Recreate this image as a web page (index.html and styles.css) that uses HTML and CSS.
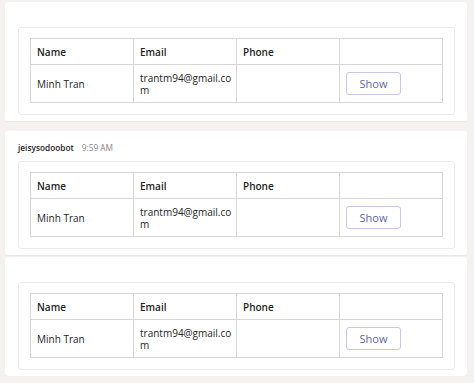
FILE: index.html
```html
<!DOCTYPE html>
<html lang="en">

<head>
  <meta charset="UTF-8" />
  <title>Chat</title>
  <link rel="stylesheet" href="styles.css">
</head>

<body>

  <div class="chat">

    <div class="message continued">
      <div class="card">
        <table class="contacts">
          <tr>
            <th>Name</th>
            <th>Email</th>
            <th>Phone</th>
            <th></th>
          </tr>
          <tr>
            <td>Minh Tran</td>
            <td>trantm94@gmail.com</td>
            <td></td>
            <td><button class="show">Show</button></td>
          </tr>
        </table>
      </div>
    </div>

    <div class="message first">
      <div class="meta">
        <span class="author">jeisysodoobot</span>
        <span class="time">9:59 AM</span>
      </div>
      <div class="card">
        <table class="contacts">
          <tr>
            <th>Name</th>
            <th>Email</th>
            <th>Phone</th>
            <th></th>
          </tr>
          <tr>
            <td>Minh Tran</td>
            <td>trantm94@gmail.com</td>
            <td></td>
            <td><button class="show">Show</button></td>
          </tr>
        </table>
      </div>
    </div>

    <div class="message continued">
      <div class="card">
        <table class="contacts">
          <tr>
            <th>Name</th>
            <th>Email</th>
            <th>Phone</th>
            <th></th>
          </tr>
          <tr>
            <td>Minh Tran</td>
            <td>trantm94@gmail.com</td>
            <td></td>
            <td><button class="show">Show</button></td>
          </tr>
        </table>
      </div>
    </div>

  </div>

</body>
</html>
```

FILE: styles.css
```css
body {
  margin: 0;
  background: #f3f2f1;
  font-family: 'Open Sans', 'Noto Sans', sans-serif;
  color: #252423;
}

.chat {
  display: flex;
  flex-direction: column;
  padding: 2px 7px 0 5px;
}

.message {
  background: #fff;
  border-radius: 3px;
  box-shadow: 0 1px 1px rgba(0, 0, 0, 0.05);
  padding: 25px 12px 6px 13px;
}

.message.first {
  margin-top: 10px;
  margin-bottom: 2px;
  padding-top: 10px;
  padding-bottom: 6px;
}

.meta {
  display: flex;
  align-items: baseline;
  gap: 8px;
  height: 13px;
  margin-bottom: 7px;
  font-size: 8.3px;
  line-height: 13px;
}

.author {
  font-weight: 600;
}

.time {
  color: #8a8886;
}

.card {
  border: 1px solid #ebebeb;
  border-radius: 3px;
  padding: 10px 11px 11px;
}

.contacts {
  width: 100%;
  table-layout: fixed;
  border-collapse: collapse;
  font-size: 10px;
  line-height: 12px;
}

.contacts th,
.contacts td {
  border: 1px solid #d6d6d6;
  padding: 0 3px 0 6px;
  text-align: left;
  vertical-align: middle;
  word-break: break-all;
}

.contacts th {
  height: 25px;
  font-weight: 600;
}

.contacts td {
  height: 37px;
}

.show {
  width: 55px;
  height: 23px;
  background: #fff;
  border: 1px solid #c9c7e8;
  border-radius: 3px;
  color: #6264a7;
  font-family: inherit;
  font-size: 11px;
  cursor: pointer;
}
```
